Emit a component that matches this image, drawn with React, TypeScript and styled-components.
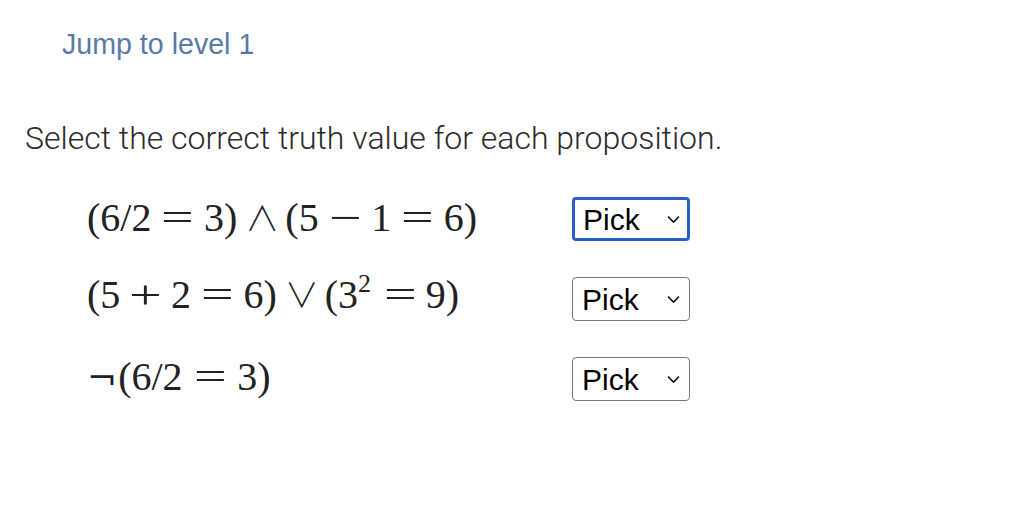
import React from 'react';
import styled, { createGlobalStyle } from 'styled-components';

const Global = createGlobalStyle`
  html, body {
    margin: 0;
    padding: 0;
    background: #ffffff;
  }
`;

const Page = styled.div`
  width: 1028px;
  height: 514px;
  box-sizing: border-box;
  padding: 28px 0 0 25px;
  font-family: Roboto, "Liberation Sans", sans-serif;
`;

const JumpLink = styled.a`
  display: block;
  margin-left: 37px;
  font-family: "Liberation Sans", Arial, sans-serif;
  font-size: 28.6px;
  line-height: 32px;
  color: #5a7aa5;
  text-decoration: none;
`;

const Prompt = styled.p`
  margin: 58px 0 0 0;
  font-size: 32px;
  font-weight: 300;
  line-height: 40px;
  color: #2b2b2b;
`;

const Rows = styled.div`
  display: grid;
  grid-template-columns: 485px 118px;
  grid-auto-rows: 80px;
  margin: 21px 0 0 62px;
  align-items: center;
`;

const Formula = styled.div`
  font-family: "Liberation Serif", "Times New Roman", serif;
  font-size: 40px;
  line-height: 44px;
  color: #222222;
  white-space: pre;
  display: flex;
  align-items: baseline;
  margin-top: -4px;
`;

const Rel = styled.span<{ $gap?: number }>`
  display: inline-block;
  transform: scaleX(1.45);
  margin: 0 ${(p) => p.$gap ?? 15}px;
`;

const Logic = styled.span`
  display: inline-block;
  font-family: "Noto Sans CJK JP", "DejaVu Sans", sans-serif;
  font-weight: 300;
  font-size: 34px;
  margin: 0 6px 0 8px;
`;

const Neg = styled.span`
  display: inline-block;
  font-family: "DejaVu Serif", serif;
  font-size: 36px;
  margin-right: 1px;
`;

const Sup = styled.span`
  font-size: 26px;
  position: relative;
  top: -16px;
  margin-right: 4px;
`;

const PickWrap = styled.div`
  position: relative;
  width: 118px;
  height: 44px;
`;

const Picker = styled.select<{ $focused?: boolean }>`
  appearance: none;
  -webkit-appearance: none;
  width: 118px;
  height: 44px;
  box-sizing: border-box;
  font-family: "Liberation Sans", Arial, sans-serif;
  font-size: 30px;
  color: #000000;
  background: #ffffff;
  border-radius: 4px;
  padding: 0 0 0 ${(p) => (p.$focused ? '8px' : '9px')};
  border: ${(p) => (p.$focused ? '3px solid #2a5fc9' : '1px solid #767676')};
  outline: none;
`;

const Chevron = styled.svg`
  position: absolute;
  right: 10px;
  top: 18px;
  pointer-events: none;
`;

const Choice = ({ focused }: { focused?: boolean }) => (
  <PickWrap>
    <Picker $focused={focused} defaultValue="pick">
      <option value="pick">Pick</option>
      <option value="true">True</option>
      <option value="false">False</option>
    </Picker>
    <Chevron width="13" height="9" viewBox="0 0 13 9">
      <path d="M1 1.5 L6.5 7 L12 1.5" fill="none" stroke="#111" strokeWidth="1.6" />
    </Chevron>
  </PickWrap>
);

export default function App() {
  return (
    <Page>
      <Global />
      <JumpLink href="#">Jump to level 1</JumpLink>
      <Prompt>Select the correct truth value for each proposition.</Prompt>
      <Rows>
        <Formula>
          <span>(6/2</span>
          <Rel>=</Rel>
          <span>3)</span>
          <Logic>∧</Logic>
          <span>(5</span>
          <Rel>−</Rel>
          <span>1</span>
          <Rel>=</Rel>
          <span>6)</span>
        </Formula>
        <Choice focused />
        <Formula>
          <span>(5</span>
          <Rel $gap={14}>+</Rel>
          <span>2</span>
          <Rel>=</Rel>
          <span>6)</span>
          <Logic>∨</Logic>
          <span>(3</span>
          <Sup>2</Sup>
          <Rel $gap={14}>=</Rel>
          <span>9)</span>
        </Formula>
        <Choice />
        <Formula>
          <Neg>¬</Neg>
          <span>(6/2</span>
          <Rel $gap={16}>=</Rel>
          <span>3)</span>
        </Formula>
        <Choice />
      </Rows>
    </Page>
  );
}
